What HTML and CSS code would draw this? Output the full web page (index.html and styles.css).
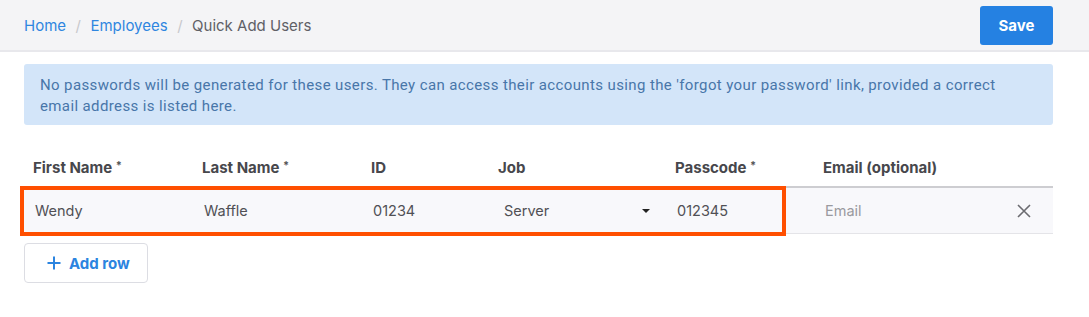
FILE: index.html
```html
<!DOCTYPE html>
<html>
<head>
<meta charset="utf-8">
<link rel="stylesheet" href="styles.css">
</head>
<body>
<header class="topbar">
  <nav class="crumbs">
    <a class="crumb-link">Home</a>
    <span class="sep">/</span>
    <a class="crumb-link">Employees</a>
    <span class="sep">/</span>
    <span class="crumb-current">Quick Add Users</span>
  </nav>
  <button class="btn-save">Save</button>
</header>
<main class="content">
  <div class="alert">No passwords will be generated for these users. They can access their accounts using the 'forgot your password' link, provided a correct email address is listed here.</div>
  <div class="table">
    <div class="thead">
      <div class="th">First Name <sup>*</sup></div>
      <div class="th">Last Name <sup>*</sup></div>
      <div class="th">ID</div>
      <div class="th">Job</div>
      <div class="th">Passcode <sup>*</sup></div>
      <div class="th">Email (optional)</div>
    </div>
    <div class="trow">
      <div class="td">Wendy</div>
      <div class="td">Waffle</div>
      <div class="td">01234</div>
      <div class="td td-select"><span>Server</span><span class="caret"></span></div>
      <div class="td">012345</div>
      <div class="td td-email"><span class="placeholder">Email</span>
        <svg class="xicon" width="14" height="14" viewBox="0 0 14 14"><path d="M1 1L13 13M13 1L1 13" stroke="#6b6b70" stroke-width="1.6" fill="none"/></svg>
      </div>
      <div class="highlight"></div>
    </div>
  </div>
  <button class="btn-add">
    <svg width="14" height="14" viewBox="0 0 14 14"><path d="M7 0.5V13.5M0.5 7H13.5" stroke="#2b84e0" stroke-width="2" fill="none"/></svg>
    <span>Add row</span>
  </button>
</main>
</body>
</html>
```
FILE: styles.css
```css
* { box-sizing: border-box; }
body {
  margin: 0;
  background: #ffffff;
  font-family: Inter, "Open Sans", sans-serif;
  color: #444;
}
.topbar {
  height: 52px;
  background: #f4f4f6;
  border-bottom: 2px solid #e8e8ec;
  display: flex;
  align-items: center;
  justify-content: space-between;
  padding: 0 36px 0 24px;
}
.crumbs {
  display: flex;
  align-items: center;
  gap: 9.5px;
  font-size: 15px;
  margin-top: 0;
}
.crumb-link { color: #2f86e0; }
.sep { color: #c8c8cc; }
.crumb-current { color: #606066; }
.btn-save {
  width: 73px;
  height: 39px;
  margin-top: 1px;
  background: #2581e2;
  color: #fff;
  border: none;
  border-radius: 3px;
  font-family: Inter, sans-serif;
  font-weight: 700;
  font-size: 15px;
}
.content {
  padding: 12px 36px 0 24px;
}
.alert {
  background: #d3e5f9;
  border-radius: 3px;
  color: #4876a9;
  font-family: Roboto, sans-serif;
  font-size: 15px;
  letter-spacing: 0.38px;
  line-height: 21px;
  padding: 11px 16px 8px 16px;
  height: 61px;
}
.table { margin-top: 26px; }
.thead, .trow {
  display: grid;
  grid-template-columns: 169px 169px 127px 177px 148px 1fr;
}
.thead { height: 35px; align-items: center; padding-bottom: 3px; }
.th {
  font-size: 15px;
  font-weight: 700;
  color: #47474c;
  padding-left: 9px;
}
.th sup { font-size: 11px; vertical-align: 4px; color: #555; }
.trow {
  position: relative;
  height: 48px;
  background: #f8f8fb;
  border-top: 2px solid #cdcdd1;
  border-bottom: 1px solid #e4e4e8;
  align-items: center;
  font-size: 14.5px;
  color: #505055;
}
.td { padding-left: 11px; }
.td-select {
  display: flex;
  align-items: center;
  justify-content: space-between;
  padding-left: 15px;
  padding-right: 16px;
}
.caret {
  width: 0; height: 0;
  border-left: 4px solid transparent;
  border-right: 4px solid transparent;
  border-top: 4px solid #222;
}
.td-email {
  display: flex;
  align-items: center;
  justify-content: space-between;
  padding-right: 22px;
}
.placeholder { color: #9a9a9f; }
.highlight {
  position: absolute;
  left: -4px;
  top: -2px;
  width: 766px;
  height: 50px;
  border: 4px solid #ff4f00;
  pointer-events: none;
}
.btn-add {
  margin-top: 9px;
  width: 124px;
  height: 40px;
  background: #fff;
  border: 1px solid #dcdde3;
  border-radius: 4px;
  display: flex;
  align-items: center;
  gap: 8px;
  padding-left: 22px;
  color: #2b84e0;
  font-family: Inter, sans-serif;
  font-weight: 700;
  font-size: 15px;
}
```
